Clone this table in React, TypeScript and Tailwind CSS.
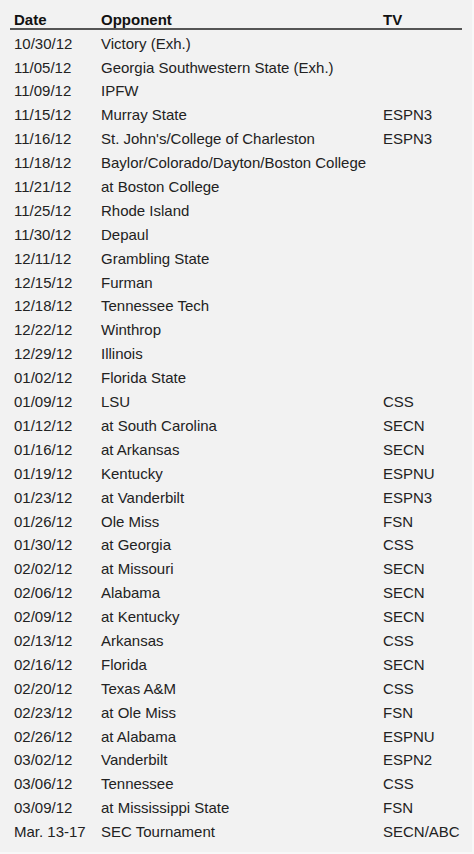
import React from "react";

const games: [string, string, string][] = [
  ["10/30/12", "Victory (Exh.)", ""],
  ["11/05/12", "Georgia Southwestern State (Exh.)", ""],
  ["11/09/12", "IPFW", ""],
  ["11/15/12", "Murray State", "ESPN3"],
  ["11/16/12", "St. John's/College of Charleston", "ESPN3"],
  ["11/18/12", "Baylor/Colorado/Dayton/Boston College", ""],
  ["11/21/12", "at Boston College", ""],
  ["11/25/12", "Rhode Island", ""],
  ["11/30/12", "Depaul", ""],
  ["12/11/12", "Grambling State", ""],
  ["12/15/12", "Furman", ""],
  ["12/18/12", "Tennessee Tech", ""],
  ["12/22/12", "Winthrop", ""],
  ["12/29/12", "Illinois", ""],
  ["01/02/12", "Florida State", ""],
  ["01/09/12", "LSU", "CSS"],
  ["01/12/12", "at South Carolina", "SECN"],
  ["01/16/12", "at Arkansas", "SECN"],
  ["01/19/12", "Kentucky", "ESPNU"],
  ["01/23/12", "at Vanderbilt", "ESPN3"],
  ["01/26/12", "Ole Miss", "FSN"],
  ["01/30/12", "at Georgia", "CSS"],
  ["02/02/12", "at Missouri", "SECN"],
  ["02/06/12", "Alabama", "SECN"],
  ["02/09/12", "at Kentucky", "SECN"],
  ["02/13/12", "Arkansas", "CSS"],
  ["02/16/12", "Florida", "SECN"],
  ["02/20/12", "Texas A&M", "CSS"],
  ["02/23/12", "at Ole Miss", "FSN"],
  ["02/26/12", "at Alabama", "ESPNU"],
  ["03/02/12", "Vanderbilt", "ESPN2"],
  ["03/06/12", "Tennessee", "CSS"],
  ["03/09/12", "at Mississippi State", "FSN"],
  ["Mar. 13-17", "SEC Tournament", "SECN/ABC"],
];

export default function App() {
  return (
    <div className="w-[474px] h-[854px] bg-[#f8f8f8] overflow-hidden">
      <div className="w-[472px] h-[852px] bg-[#f2f2f2] text-[#222] text-[15px] font-['Liberation_Sans',Arial,sans-serif]">
        <div className="pt-[9px] px-[10px]">
          <div className="grid grid-cols-[87px_282px_1fr] h-[21px] items-center font-bold text-[#111] border-b-[2px] border-[#555] pl-[4px]">
            <span>Date</span>
            <span>Opponent</span>
            <span>TV</span>
          </div>
          <div className="pt-[2px]">
            {games.map(([date, opp, tv]) => (
              <div
                key={date}
                className="grid grid-cols-[87px_282px_1fr] h-[23.9px] items-center pl-[4px]"
              >
                <span>{date}</span>
                <span className="whitespace-nowrap">{opp}</span>
                <span>{tv}</span>
              </div>
            ))}
          </div>
        </div>
      </div>
    </div>
  );
}
